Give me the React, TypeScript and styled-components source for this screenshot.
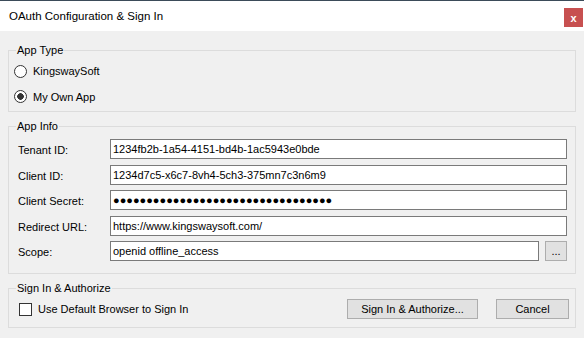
import { Fragment } from "react"
import styled, { createGlobalStyle } from "styled-components"

// #region styled
const GlobalStyle = createGlobalStyle`
  html,
  body {
    margin: 0;
    padding: 0;
    background: #f0f0f0;
  }
  body {
    font-family: "Liberation Sans", Arial, sans-serif;
    font-size: 11px;
    color: #000;
  }
`

const Window = styled.div`
  width: 584px;
  height: 338px;
  box-sizing: border-box;
  border-top: 1px solid #3b4b59;
  background: #f0f0f0;
  display: flex;
  flex-direction: column;
  overflow: hidden;
`

const TitleBar = styled.header`
  height: 30px;
  background: #fff;
  display: flex;
  align-items: flex-start;
  justify-content: space-between;
  padding-left: 9px;

  h1 {
    margin: 0;
    font-size: 11.5px;
    font-weight: normal;
    line-height: 30px;
    color: #000;
  }
`

const CloseButton = styled.button`
  margin: 7px 1px 0 0;
  width: 19px;
  height: 19px;
  padding: 0;
  border: 0;
  background: #c75050;
  color: #fff;
  font: bold 11px/18px "Liberation Sans", Arial, sans-serif;
`

const Body = styled.main`
  padding: 12px 8px 0;
`

const Group = styled.fieldset<{ $pt: number; $pb: number; $pr?: number }>`
  margin: 0 0 7px;
  min-width: 0;
  border: 1px solid #dcdcdc;
  padding: ${(p) => p.$pt}px ${(p) => p.$pr ?? 8}px ${(p) => p.$pb}px 6px;
`

const Legend = styled.legend`
  margin-left: 1px;
  padding: 0 1px;
  font-size: 11px;
  line-height: 14px;
`

const RadioList = styled.div`
  display: flex;
  flex-direction: column;
  gap: 5.5px;
  margin-left: -1px;
`

const Choice = styled.label`
  height: 20px;
  display: flex;
  align-items: center;
  gap: 6px;
`

const Radio = styled.input`
  appearance: none;
  margin: 0;
  width: 13px;
  height: 13px;
  border: 1px solid #333;
  border-radius: 50%;
  background: #fff;

  &:checked {
    background: radial-gradient(circle, #333 0 3px, #fff 3.6px);
  }
`

const Check = styled.input`
  appearance: none;
  margin: 0 0 0 4px;
  width: 13px;
  height: 13px;
  border: 1px solid #333;
  background: #fff;
`

const Fields = styled.div`
  display: grid;
  grid-template-columns: 92px 1fr;
  row-gap: 5.5px;
  margin-left: 3px;
`

const FieldLabel = styled.label`
  height: 20px;
  box-sizing: border-box;
  padding-top: 3px;
  line-height: 17px;
`

const TextBox = styled.input`
  height: 20px;
  width: 100%;
  min-width: 0;
  box-sizing: border-box;
  margin: 0;
  padding: 0 2px;
  border: 1px solid #7a7a7a;
  border-radius: 0;
  background: #fff;
  color: #000;
  font: 11px "Liberation Sans", Arial, sans-serif;
  outline: none;
`

const ScopeRow = styled.div`
  display: flex;
  gap: 6px;
`

const Button = styled.button<{ $w: number }>`
  width: ${(p) => p.$w}px;
  height: 20px;
  flex: none;
  margin: 0;
  padding: 0;
  border: 1px solid #adadad;
  background: #e1e1e1;
  color: #000;
  font: 11px "Liberation Sans", Arial, sans-serif;
`

const ActionRow = styled.div`
  display: flex;
  align-items: center;
  justify-content: space-between;
  height: 20px;
`

const Buttons = styled.div`
  display: flex;
  gap: 18px;
`
// #endregion

const fields = [
  { label: "Tenant ID:", value: "1234fb2b-1a54-4151-bd4b-1ac5943e0bde" },
  { label: "Client ID:", value: "1234d7c5-x6c7-8vh4-5ch3-375mn7c3n6m9" },
  { label: "Client Secret:", value: "●".repeat(33) },
  { label: "Redirect URL:", value: "https://www.kingswaysoft.com/" },
]

const App = () => {
  return (
    <Window>
      <GlobalStyle />
      <TitleBar>
        <h1>OAuth Configuration &amp; Sign In</h1>
        <CloseButton>x</CloseButton>
      </TitleBar>

      <Body>
        <Group $pt={4} $pb={4.5}>
          <Legend>App Type</Legend>
          <RadioList>
            <Choice>
              <Radio type="radio" name="apptype" />
              KingswaySoft
            </Choice>
            <Choice>
              <Radio type="radio" name="apptype" defaultChecked />
              My Own App
            </Choice>
          </RadioList>
        </Group>

        <Group $pt={6} $pb={12}>
          <Legend>App Info</Legend>
          <Fields>
            {fields.map((f) => (
              <Fragment key={f.label}>
                <FieldLabel>{f.label}</FieldLabel>
                <TextBox readOnly value={f.value} />
              </Fragment>
            ))}
            <FieldLabel>Scope:</FieldLabel>
            <ScopeRow>
              <TextBox readOnly value="openid offline_access" />
              <Button $w={22}>...</Button>
            </ScopeRow>
          </Fields>
        </Group>

        <Group $pt={4} $pb={8} $pr={6}>
          <Legend>Sign In &amp; Authorize</Legend>
          <ActionRow>
            <Choice>
              <Check type="checkbox" />
              Use Default Browser to Sign In
            </Choice>
            <Buttons>
              <Button $w={131}>Sign In &amp; Authorize...</Button>
              <Button $w={73}>Cancel</Button>
            </Buttons>
          </ActionRow>
        </Group>
      </Body>
    </Window>
  )
}

export default App
